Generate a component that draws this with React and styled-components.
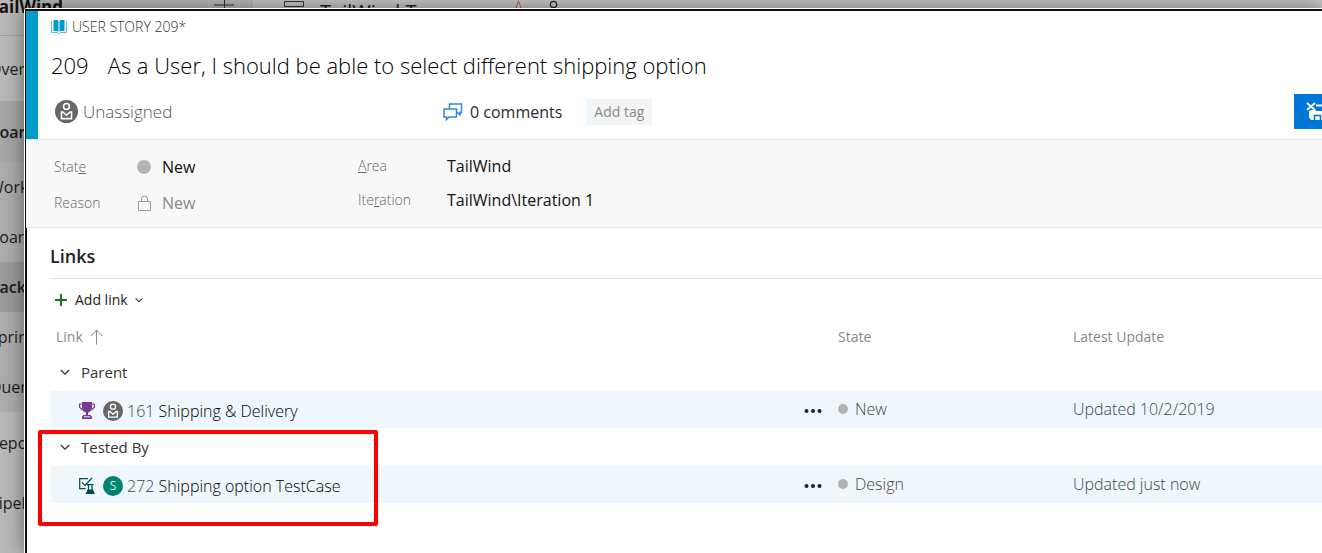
import React from "react";
import styled, { createGlobalStyle } from "styled-components";

const Global = createGlobalStyle`
  * { box-sizing: border-box; }
  html, body, #root { height: 100%; }
  body { margin: 0; overflow: hidden; font-family: "Open Sans", "Noto Sans", sans-serif; font-size: 14px; line-height: 20px; color: #333; }
  button, input, select { font: inherit; color: inherit; }
  button { border: 0; padding: 0; background: none; cursor: pointer; }
  svg { flex: none; display: block; }
`;

const Screen = styled.div`
  position: relative;
  display: flex;
  height: 100%;
  overflow: hidden;
  background: #c6c6c6;
`;

const Sidebar = styled.nav`
  width: 254px;
  flex: none;
  background: #b8b8b8;
  border-right: 1px solid #c8c8c8;
`;

const Project = styled.div`
  display: flex;
  justify-content: space-between;
  height: 36px;
  padding-right: 18px;
  margin-left: -11px;
  border-bottom: 1px solid #a0a0a0;
  font-size: 17px;
  line-height: 14px;
  font-weight: 700;
  color: #111;
`;

const NavItem = styled.a`
  display: flex;
  align-items: center;
  height: ${(p) => p.$h || 50}px;
  text-indent: -11px;
  color: #1c1c1c;
  text-decoration: none;
  font-size: 16px;
  font-weight: ${(p) => (p.$bold ? 600 : 400)};
  background: ${(p) => p.$bg || "transparent"};
`;

const Backdrop = styled.header`
  display: flex;
  align-items: flex-start;
  gap: 16px;
  flex: 1;
  padding: 0 30px;
  font-size: 20px;
  line-height: 24px;
  color: #222;
`;

const Crumb = styled.span`
  width: 174px;
`;

const Dialog = styled.main`
  position: absolute;
  inset: 8px 0 0 24px;
  display: flex;
  flex-direction: column;
  background: #fff;
  border-left: 1px solid #fff;
  border-top: 1px solid #fff;
  border-top-left-radius: 3px;
  box-shadow: 0 0 20px rgba(0, 0, 0, 0.45);
`;

const Frame = styled.div`
  flex: 1;
  display: flex;
  flex-direction: column;
  border-top: 2px solid #0d0d0d;
  border-left: 1px solid #0d0d0d;
`;

const Head = styled.header`
  border-left: 12px solid #009ccc;
  height: 128px;
  padding: 6px 0 0 13px;
`;

const TypeLine = styled.div`
  display: flex;
  align-items: center;
  gap: 5px;
  height: 20px;
  font-size: 14px;
  font-weight: 300;
  color: #333;
`;

const TitleLine = styled.h1`
  display: flex;
  gap: 19px;
  margin: 12px 0 0;
  font-size: 22px;
  line-height: 32px;
  font-weight: 300;
  color: #000;
`;

const MetaLine = styled.div`
  display: grid;
  grid-template-columns: 388px auto auto 1fr;
  align-items: center;
  height: 37px;
  margin-top: 12px;
  padding-left: 4px;
`;

const Person = styled.button`
  display: flex;
  align-items: center;
  gap: 5px;
  font-size: 17px;
  font-weight: 300;
  color: #555;
`;

const Comments = styled.button`
  display: flex;
  align-items: center;
  gap: 7px;
  font-size: 16px;
  color: #2b2b2b;
`;

const Tag = styled.button`
  height: 26px;
  padding: 0 8px;
  margin-left: 24px;
  background: #eff6fc;
  font-size: 14px;
  color: #888;
`;

const Save = styled.button`
  justify-self: end;
  display: flex;
  align-items: center;
  width: 28px;
  height: 35px;
  padding-left: 12px;
  overflow: hidden;
  background: #0078d7;
`;

const Fields = styled.section`
  display: grid;
  grid-template-columns: 304px 1fr;
  height: 89px;
  padding: 9px 0 0 28px;
  background: #f8f8f8;
  border-top: 1px solid #e6e6e6;
  border-bottom: 1px solid #e6e6e6;
`;

const FieldColumn = styled.dl`
  margin: 0;
  display: grid;
  grid-template-columns: ${(p) => p.$label}px 1fr;
  grid-auto-rows: ${(p) => p.$row}px;
  align-items: center;
  align-content: start;
`;

const FieldLabel = styled.dt`
  font-size: 14px;
  font-weight: 300;
  color: #666;
`;

const FieldValue = styled.dd`
  display: flex;
  align-items: center;
  gap: 11px;
  margin: 0;
  font-size: 16px;
  color: ${(p) => (p.$muted ? "#888" : "#111")};
`;

const Body = styled.section`
  flex: 1;
  border-left: 1px solid #0d0d0d;
  padding-left: 23px;
`;

const SectionTitle = styled.h2`
  margin: 0;
  height: 51px;
  padding-top: 16px;
  border-bottom: 1px solid #e6e6e6;
  font-size: 18px;
  line-height: 24px;
  font-weight: 600;
  color: #222;
`;

const AddLink = styled.button`
  display: flex;
  align-items: center;
  gap: 7px;
  height: 42px;
  padding-left: 4px;
  color: #222;
`;

const TableArea = styled.div`
  padding-left: 1px;
`;

const Table = styled.table`
  width: 100%;
  table-layout: fixed;
  border-collapse: collapse;
  text-align: left;
`;

const LinkColumn = styled.col``;

const StateColumn = styled.col`
  width: 235px;
`;

const UpdateColumn = styled.col`
  width: 249px;
`;

const HeadCell = styled.th`
  height: 32px;
  padding: 0 0 0 ${(p) => p.$pad || 0}px;
  font-weight: 400;
  color: #888;
`;

const GroupCell = styled.th`
  height: 38px;
  padding: 0 0 0 9px;
  font-weight: 400;
  font-size: 15px;
  color: #333;
`;

const ItemCell = styled.td`
  height: 37px;
  padding: 2px 16px 0 28px;
  background: #eff6fc;
  font-size: 16px;
  font-weight: 300;
`;

const InfoCell = styled.td`
  height: 37px;
  padding: 0 0 2px;
  background: #eff6fc;
  font-size: 16px;
  font-weight: 300;
  color: #444;
`;

const Inline = styled.div`
  display: flex;
  align-items: center;
  gap: ${(p) => p.$gap || 7}px;
`;

const ItemLink = styled.a`
  color: #000;
  text-decoration: none;
`;

const ItemId = styled.span`
  color: #444;
`;

const More = styled.button`
  margin-left: auto;
`;

const Dot = styled.span`
  width: ${(p) => p.$size}px;
  height: ${(p) => p.$size}px;
  border-radius: 50%;
  background: #b2b2b2;
`;

const Initial = styled.span`
  display: grid;
  place-items: center;
  width: 20px;
  height: 20px;
  border-radius: 50%;
  background: #008272;
  color: #d6efec;
  font-size: 12px;
  font-weight: 400;
`;

const Highlight = styled.div`
  position: absolute;
  left: 13px;
  top: 421px;
  width: 340px;
  height: 96px;
  border: 4px solid #f00;
  border-radius: 2px;
  pointer-events: none;
`;

const Avatar = ({ size }) => (
  <svg width={size} height={size} viewBox="0 0 22 22" fill="none" aria-hidden="true">
    <circle cx="11" cy="11" r="11" fill="#666" />
    <circle cx="11" cy="6.200" r="2.800" stroke="#fff" strokeWidth="1.500" />
    <path d="M6.200 11.500v6.300h9.600v-6.300h-1.300L11 14.500l-3.500-3z" stroke="#fff" strokeWidth="1.500" />
  </svg>
);

const Book = () => (
  <svg width="16" height="14" viewBox="0 0 16 14" aria-hidden="true">
    <path d="M2.500 0h4l1 1v11l-1-1h-4zM13.500 0h-4l-1 1v11l1-1h4z" fill="#009ccc" />
    <path d="M.5 1v11.500h6l1.500 1 1.500-1h6V1" fill="none" stroke="#58bfe0" />
  </svg>
);

const Bubbles = () => (
  <svg width="20" height="18" viewBox="0 0 20 18" fill="#fff" stroke="#2b88d8" strokeWidth="1.500" aria-hidden="true">
    <path d="M6.500 1h12v8.500H17V12l-2.500-2.500h-8z" />
    <path d="M1 6h12.500v8H6l-2.500 2.500V14H1z" />
  </svg>
);

const SaveClose = () => (
  <svg width="22" height="20" viewBox="0 0 22 20" fill="none" stroke="#fff" aria-hidden="true">
    <path d="M1 1l8 7M9 1L1 8M10 3.500h12" strokeWidth="1.800" />
    <path d="M3 9l3-1h3l2 1h11v9H5.500L3 15.500z" fill="#fff" stroke="none" />
    <path d="M8.500 18v-4.500h6V18" stroke="#0078d7" strokeWidth="1.500" />
  </svg>
);

const Lock = () => (
  <svg width="14" height="17" viewBox="0 0 14 17" fill="none" stroke="#999" aria-hidden="true">
    <path d="M1.500 6.500h12v9h-12zM4.500 6.500V4a3 3 0 0 1 6 0v2.500" />
  </svg>
);

const Plus = () => (
  <svg width="14" height="14" viewBox="0 0 14 14" stroke="#107c10" strokeWidth="2" aria-hidden="true">
    <path d="M7 1v12M1 7h12" />
  </svg>
);

const Chevron = ({ size = 10 }) => (
  <svg width={size} height={size} viewBox="0 0 10 10" fill="none" stroke="#333" strokeWidth="1.300" aria-hidden="true">
    <path d="M.8 3L5 7.200 9.200 3" />
  </svg>
);

const ArrowUp = () => (
  <svg width="14" height="16" viewBox="0 0 14 16" fill="none" stroke="#888" aria-hidden="true">
    <path d="M6.500 15.500V1M.8 7l5.700-6 5.700 6" />
  </svg>
);

const Trophy = () => (
  <svg width="16" height="17" viewBox="0 0 16 17" aria-hidden="true">
    <path d="M3 0h10v5.500c0 3-2 4.500-4 5v2.500h2.500l1.500 2V17H3v-2l1.500-2H7v-2.500c-2-.5-4-2-4-5z" fill="#773b93" />
    <path d="M4 2H.6v3.200L3.500 8M12 2h3.400v3.200L12.500 8" fill="none" stroke="#773b93" strokeWidth="1.200" />
    <path d="M5 14.800h6" stroke="#eff6fc" />
  </svg>
);

const TestCase = () => (
  <svg width="16" height="18" viewBox="0 0 16 18" fill="none" stroke="#004b50" aria-hidden="true">
    <path d="M9 1.600H.7v10h5.800M3 5.500l3 3L13 1" strokeWidth="1.200" />
    <path d="M8 7.600h6.500M9.500 8v4L7.500 16.500h7.500L13 12V8" strokeWidth="1.200" />
    <path d="M9.200 12.500h4l2 4.500H7.200z" fill="#004b50" stroke="none" />
  </svg>
);

const Ellipsis = () => (
  <svg width="18" height="4" viewBox="0 0 18 4" fill="#222" aria-hidden="true">
    <circle cx="2.500" cy="2" r="2" />
    <circle cx="9" cy="2" r="2" />
    <circle cx="15.500" cy="2" r="2" />
  </svg>
);

const nav = [
  { text: "Overview", h: 65 },
  { text: "Boards", h: 61, bold: true, bg: "#a6a6a6" },
  { text: "Work items", bg: "#acacac" },
  { text: "Boards", bg: "#acacac" },
  { text: "Backlogs", bold: true, bg: "#9a9a9a" },
  { text: "Sprints", bg: "#acacac" },
  { text: "Queries", bg: "#acacac" },
  { text: "Repos", h: 61 },
  { text: "Pipelines", h: 60 },
];

const groups = [
  { name: "Parent", id: 161, title: "Shipping & Delivery", state: "New", updated: "Updated 10/2/2019", type: <Trophy />, owner: <Avatar size={20} /> },
  { name: "Tested By", id: 272, title: "Shipping option TestCase", state: "Design", updated: "Updated just now", type: <TestCase />, owner: <Initial>S</Initial> },
];

export default function App() {
  return (
    <Screen>
      <Global />
      <Sidebar>
        <Project>
          <span>TailWind</span>
          <svg width="22" height="12" viewBox="0 0 22 12" stroke="#333" aria-hidden="true"><path d="M11.500 0v12M1 5h20" /></svg>
        </Project>
        {nav.map((n, i) => (
          <NavItem href="#" key={i} $h={n.h} $bold={n.bold} $bg={n.bg}>{n.text}</NavItem>
        ))}
      </Sidebar>
      <Backdrop>
        <svg width="20" height="8" viewBox="0 0 20 8" fill="none" stroke="#333" aria-hidden="true"><path d="M.5 1.500h19v5H.5z" /></svg>
        <Crumb>TailWind Team</Crumb>
        <svg width="18" height="24" viewBox="0 0 18 24" fill="none" stroke="#a8643c" aria-hidden="true">
          <path d="M8.500 1l2.800 7.500h6.200l-5 4.500 2 7-6-4-6 4 2-7-4-4.500h5.200z" />
        </svg>
        <svg width="20" height="18" viewBox="0 0 20 18" fill="none" stroke="#222" strokeWidth="1.200" aria-hidden="true">
          <circle cx="9.500" cy="4.500" r="3.200" /><path d="M4 17c0-10 11-10 11 0" />
        </svg>
      </Backdrop>
      <Dialog>
        <Frame>
          <Head>
            <TypeLine><Book />USER STORY 209*</TypeLine>
            <TitleLine><span>209</span><span>As a User, I should be able to select different shipping option</span></TitleLine>
            <MetaLine>
              <Person><Avatar size={23} />Unassigned</Person>
              <Comments><Bubbles />0 comments</Comments>
              <Tag>Add tag</Tag>
              <Save aria-label="Save and close"><SaveClose /></Save>
            </MetaLine>
          </Head>
          <Fields>
            <FieldColumn $label={83} $row={36}>
              <FieldLabel>Stat<u>e</u></FieldLabel>
              <FieldValue><Dot $size={14} />New</FieldValue>
              <FieldLabel>Reason</FieldLabel>
              <FieldValue $muted><Lock />New</FieldValue>
            </FieldColumn>
            <FieldColumn $label={89} $row={34}>
              <FieldLabel><u>A</u>rea</FieldLabel>
              <FieldValue>TailWind</FieldValue>
              <FieldLabel>Ite<u>r</u>ation</FieldLabel>
              <FieldValue>TailWind\Iteration 1</FieldValue>
            </FieldColumn>
          </Fields>
          <Body>
            <SectionTitle>Links</SectionTitle>
            <AddLink><Plus />Add link<Chevron size={8} /></AddLink>
            <TableArea>
              <Table>
                <colgroup><LinkColumn /><StateColumn /><UpdateColumn /></colgroup>
                <thead>
                  <tr>
                    <HeadCell $pad={5}><Inline>Link<ArrowUp /></Inline></HeadCell>
                    <HeadCell>State</HeadCell>
                    <HeadCell>Latest Update</HeadCell>
                  </tr>
                </thead>
                {groups.map((g) => (
                  <tbody key={g.id}>
                    <tr>
                      <GroupCell colSpan={3}><Inline $gap={11}><Chevron />{g.name}</Inline></GroupCell>
                    </tr>
                    <tr>
                      <ItemCell>
                        <Inline $gap={4}>
                          <Inline $gap={8}>{g.type}{g.owner}</Inline>
                          <ItemLink href="#"><ItemId>{g.id}</ItemId> {g.title}</ItemLink>
                          <More aria-label="More actions"><Ellipsis /></More>
                        </Inline>
                      </ItemCell>
                      <InfoCell><Inline><Dot $size={10} />{g.state}</Inline></InfoCell>
                      <InfoCell>{g.updated}</InfoCell>
                    </tr>
                  </tbody>
                ))}
              </Table>
            </TableArea>
          </Body>
        </Frame>
        <Highlight />
      </Dialog>
    </Screen>
  );
}
